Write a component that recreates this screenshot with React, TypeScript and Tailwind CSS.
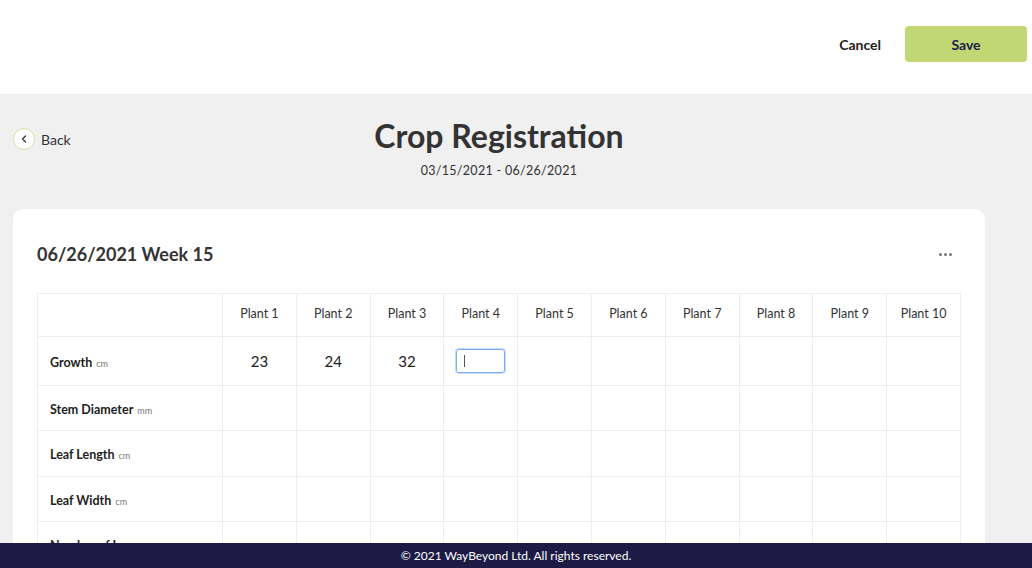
import { ChevronLeft } from "lucide-react";

const plants = Array.from({ length: 10 }, (_, i) => `Plant ${i + 1}`);

const rows = [
  { label: "Growth", unit: "cm", values: ["23", "24", "32"], h: "h-[49px]" },
  { label: "Stem Diameter", unit: "mm", values: [], h: "h-[45px]" },
  { label: "Leaf Length", unit: "cm", values: [], h: "h-[46px]" },
  { label: "Leaf Width", unit: "cm", values: [], h: "h-[45px]" },
  { label: "Number of Leaves", unit: "", values: [], h: "h-[45px]" },
];

const App = () => {
  return (
    <div className="h-[568px] flex flex-col bg-[#f0f0f0] text-[#333] font-['Lato','Noto_Sans',sans-serif] overflow-hidden">
      <header className="h-[94px] shrink-0 bg-white flex items-start justify-end pt-[26px] pr-[5px]">
        <button className="h-[36px] mr-[24px] text-[14px] font-bold text-[#222]">Cancel</button>
        <button className="h-[36px] w-[122px] rounded-[4px] bg-[#c1d774] text-[14px] font-bold text-[#1d1b4a]">
          Save
        </button>
      </header>

      <main className="flex-1 min-h-0 overflow-hidden px-[13px] pr-[47px]">
        <div className="relative pt-[23px] flex flex-col items-center">
          <button className="absolute left-0 top-[34px] flex items-center gap-[6px] text-[14px] text-[#333]">
            <span className="h-[22px] w-[22px] rounded-full border border-[#d2e1a0] bg-white flex items-center justify-center">
              <ChevronLeft className="h-[12px] w-[12px] text-[#333]" strokeWidth={2.5} />
            </span>
            Back
          </button>
          <h1 className="text-[32px] font-bold leading-[38px] text-[#333]">Crop Registration</h1>
          <p className="mt-[7px] text-[12.5px] tracking-[0.3px] text-[#333]">03/15/2021 - 06/26/2021</p>
        </div>

        <section className="mt-[28px] rounded-[10px] bg-white px-[24px] pt-[32px] pb-6">
          <div className="flex items-center justify-between">
            <h2 className="text-[18px] leading-[27px] font-bold text-[#333]">06/26/2021 Week 15</h2>
            <div className="mr-[9px] flex gap-[1.5px]">
              <span className="h-[3.5px] w-[3.5px] rounded-full bg-[#777]" />
              <span className="h-[3.5px] w-[3.5px] rounded-full bg-[#777]" />
              <span className="h-[3.5px] w-[3.5px] rounded-full bg-[#777]" />
            </div>
          </div>

          <table className="mt-[25px] w-full border-collapse table-fixed">
            <thead>
              <tr className="h-[43px]">
                <th className="w-[185px] border border-[#eeeeee]" />
                {plants.map((p) => (
                  <th key={p} className="border border-[#eeeeee] text-[12.5px] font-normal text-[#333]">
                    {p}
                  </th>
                ))}
              </tr>
            </thead>
            <tbody>
              {rows.map((r, ri) => (
                <tr key={r.label} className={r.h}>
                  <td className="border border-[#eeeeee] pl-[12px] text-left">
                    <span className="text-[12.5px] font-bold text-[#222]">{r.label}</span>
                    {r.unit && <span className="ml-[4px] text-[9px] text-[#777]">{r.unit}</span>}
                  </td>
                  {plants.map((p, i) => (
                    <td key={p} className="border border-[#eeeeee] text-center text-[15px] text-[#222]">
                      {r.values[i] ?? ""}
                      {ri === 0 && i === 3 && (
                        <div className="mx-auto flex h-[24px] w-[49px] items-center rounded-[3px] border border-[#7eaef2] pl-[7px] shadow-[0_0_0_1px_#c7dcfb]">
                          <span className="h-[12px] w-px bg-[#555]" />
                        </div>
                      )}
                    </td>
                  ))}
                </tr>
              ))}
            </tbody>
          </table>
        </section>
      </main>

      <footer className="h-[25px] shrink-0 bg-[#1d1b45] flex items-center justify-center text-[12px] text-white">
        © 2021 WayBeyond Ltd. All rights reserved.
      </footer>
    </div>
  );
};

export default App;
